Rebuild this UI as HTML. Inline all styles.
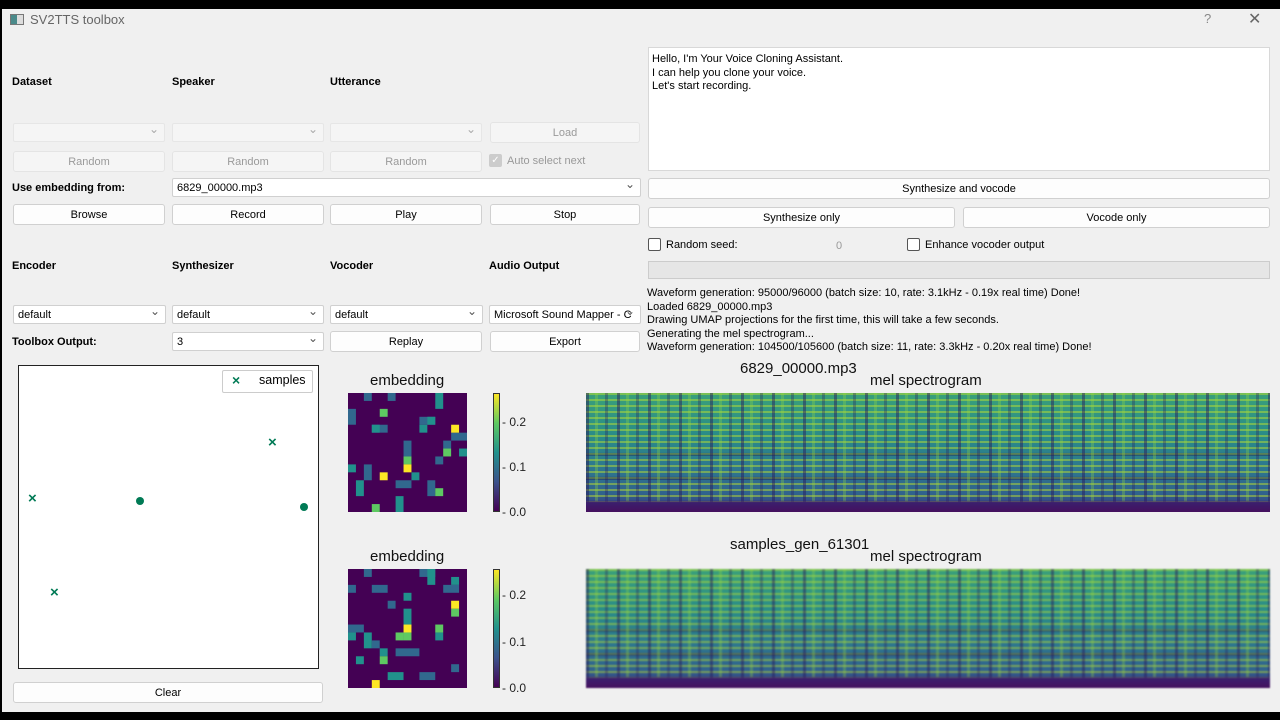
<!DOCTYPE html>
<html><head><meta charset="utf-8"><style>
*{box-sizing:border-box;margin:0;padding:0}
body{width:1280px;height:720px;background:#000;font-family:"Liberation Sans",sans-serif;font-size:11px;color:#000;position:relative;overflow:hidden}
.win{position:absolute;left:2px;top:9px;width:1278px;height:703px;background:#f0f0f0}
.a{position:absolute}
.lbl{position:absolute;font-weight:bold;font-size:11px;margin-top:1px}
.btn{position:absolute;height:21px;background:#fdfdfd;border:1px solid #d0d0d0;border-radius:3px;text-align:center;line-height:20px;font-size:11px}
.dis{background:#f5f5f5;border-color:#e4e4e4;color:#9a9a9a}
.cb{position:absolute;height:19px;background:#fff;border:1px solid #d0d0d0;border-radius:2px;line-height:18px;padding-left:4px;font-size:11px}
.cb:after{content:"⌄";position:absolute;right:5px;top:-4px;color:#555;font-size:12px}
.cbd{background:#f5f5f5;border-color:#e6e6e6}
.cbd:after{color:#aaa}
.t{position:absolute;font-size:15px;color:#111}
.spec{position:absolute;background:
linear-gradient(180deg,rgba(0,0,0,0) 0 90%,#3b1f6e 92%,#45105e 100%),
repeating-linear-gradient(90deg,rgba(40,20,90,.45) 0 3px,rgba(0,0,0,0) 3px 9px,rgba(150,220,60,.3) 9px 12px,rgba(0,0,0,0) 12px 19px,rgba(40,20,90,.3) 19px 22px,rgba(0,0,0,0) 22px 31px),
linear-gradient(180deg,rgba(0,0,0,0) 50%,rgba(20,20,80,.35) 51% 53%,rgba(0,0,0,0) 53% 70%,rgba(20,10,80,.35) 71% 73%,rgba(0,0,0,0) 73%),
repeating-linear-gradient(180deg,rgba(200,230,40,.45) 0 2px,rgba(0,0,0,0) 2px 6px),
linear-gradient(180deg,#3aa07a 0%,#2a8c88 35%,#2d7a8e 60%,#30628d 85%,#3b2f7a 100%)}
.cbar{position:absolute;width:7px;background:linear-gradient(0deg,#440154,#3b528b,#21918c,#5ec962,#fde725);border:1px solid #333}
.tick{position:absolute;font-size:12px;color:#222}
</style></head><body>
<div class="win">
<div class="a" style="left:8px;top:5px;width:14px;height:11px;border:1px solid #777;background:linear-gradient(90deg,#4a8a8a 50%,#ddd 50%)"></div>
<div class="a" style="left:28px;top:3px;font-size:13px;color:#666">SV2TTS toolbox</div>
<div class="a" style="left:1202px;top:2px;font-size:13px;color:#888">?</div>
<div class="a" style="left:1246px;top:0px;font-size:16px;color:#666">✕</div>

<div class="lbl" style="left:10px;top:66px">Dataset</div>
<div class="lbl" style="left:170px;top:66px">Speaker</div>
<div class="lbl" style="left:328px;top:66px">Utterance</div>
<div class="cb cbd" style="left:11px;top:114px;width:152px"></div>
<div class="cb cbd" style="left:170px;top:114px;width:152px"></div>
<div class="cb cbd" style="left:328px;top:114px;width:152px"></div>
<div class="btn dis" style="left:488px;top:113px;width:150px">Load</div>
<div class="btn dis" style="left:11px;top:142px;width:152px">Random</div>
<div class="btn dis" style="left:170px;top:142px;width:152px">Random</div>
<div class="btn dis" style="left:328px;top:142px;width:152px">Random</div>
<div class="a" style="left:487px;top:145px;width:13px;height:13px;background:#ccc;border-radius:2px;color:#fff;font-size:10px;text-align:center;line-height:13px">✓</div>
<div class="a" style="left:505px;top:146px;color:#999">Auto select next</div>
<div class="lbl" style="left:10px;top:172px">Use embedding from:</div>
<div class="cb" style="left:170px;top:169px;width:469px">6829_00000.mp3</div>
<div class="btn" style="left:11px;top:195px;width:152px">Browse</div>
<div class="btn" style="left:170px;top:195px;width:152px">Record</div>
<div class="btn" style="left:328px;top:195px;width:152px">Play</div>
<div class="btn" style="left:488px;top:195px;width:150px">Stop</div>

<div class="lbl" style="left:10px;top:250px">Encoder</div>
<div class="lbl" style="left:170px;top:250px">Synthesizer</div>
<div class="lbl" style="left:328px;top:250px">Vocoder</div>
<div class="lbl" style="left:487px;top:250px">Audio Output</div>
<div class="cb" style="left:11px;top:296px;width:153px">default</div>
<div class="cb" style="left:170px;top:296px;width:152px">default</div>
<div class="cb" style="left:328px;top:296px;width:153px">default</div>
<div class="cb" style="left:487px;top:296px;width:152px;overflow:hidden;white-space:nowrap">Microsoft Sound Mapper - C</div>
<div class="lbl" style="left:10px;top:326px">Toolbox Output:</div>
<div class="cb" style="left:170px;top:323px;width:152px">3</div>
<div class="btn" style="left:328px;top:322px;width:152px">Replay</div>
<div class="btn" style="left:488px;top:322px;width:150px">Export</div>

<div class="a" style="left:646px;top:38px;width:622px;height:124px;background:#fff;border:1px solid #d8d8d8;padding:5px 3px;line-height:13.5px;font-size:11px">Hello, I'm Your Voice Cloning Assistant.<br>I can help you clone your voice.<br>Let's start recording.</div>
<div class="btn" style="left:646px;top:169px;width:622px">Synthesize and vocode</div>
<div class="btn" style="left:646px;top:198px;width:307px">Synthesize only</div>
<div class="btn" style="left:961px;top:198px;width:307px">Vocode only</div>
<div class="a" style="left:646px;top:229px;width:13px;height:13px;background:#fff;border:1px solid #555;border-radius:2px"></div>
<div class="a" style="left:664px;top:230px">Random seed:</div>
<div class="a" style="left:800px;top:227px;width:102px;height:19px;background:#f0f0f0;color:#999;padding:4px 34px">0</div>
<div class="a" style="left:905px;top:229px;width:13px;height:13px;background:#fff;border:1px solid #555;border-radius:2px"></div>
<div class="a" style="left:923px;top:230px">Enhance vocoder output</div>
<div class="a" style="left:646px;top:252px;width:622px;height:18px;background:#e6e6e6;border:1px solid #ccc"></div>
<div class="a" style="left:645px;top:278px;line-height:13.5px;font-size:11px">Waveform generation: 95000/96000 (batch size: 10, rate: 3.1kHz - 0.19x real time) Done!<br>Loaded 6829_00000.mp3<br>Drawing UMAP projections for the first time, this will take a few seconds.<br>Generating the mel spectrogram...<br>Waveform generation: 104500/105600 (batch size: 11, rate: 3.3kHz - 0.20x real time) Done!</div>

<div class="a" style="left:16px;top:356px;width:301px;height:304px;background:#fff;border:1px solid #222"></div>
<div class="a" style="left:220px;top:361px;width:91px;height:23px;border:1px solid #ccc;border-radius:2px;background:#fff"></div>
<div class="a" style="left:230px;top:363px;color:#007a55;font-size:14px;font-weight:bold">×</div>
<div class="a" style="left:257px;top:364px;font-size:12.5px">samples</div>
<div class="a" style="left:266px;top:425px;color:#007a55;font-size:15px;font-weight:bold">×</div>
<div class="a" style="left:26px;top:481px;color:#007a55;font-size:15px;font-weight:bold">×</div>
<div class="a" style="left:48px;top:575px;color:#007a55;font-size:15px;font-weight:bold">×</div>
<div class="a" style="left:134px;top:488px;width:8px;height:8px;border-radius:50%;background:#007a55"></div>
<div class="a" style="left:298px;top:494px;width:8px;height:8px;border-radius:50%;background:#007a55"></div>
<div class="btn" style="left:11px;top:673px;width:310px">Clear</div>

<div class="t" style="left:368px;top:363px">embedding</div>
<svg class="a" style="left:346px;top:384px" width="119" height="119" viewBox="0 0 15 15"><rect width="15" height="15" fill="#440154"/>
<g fill="#31688e"><rect x="2" y="0" width="1" height="1"/><rect x="5" y="0" width="1" height="1"/><rect x="0" y="2" width="1" height="2"/><rect x="3" y="4" width="2" height="1"/><rect x="7" y="6" width="1" height="2"/><rect x="12" y="6" width="1" height="1"/><rect x="11" y="8" width="1" height="1"/><rect x="2" y="9" width="1" height="2"/><rect x="6" y="11" width="2" height="1"/><rect x="10" y="11" width="1" height="2"/><rect x="13" y="5" width="2" height="1"/><rect x="9" y="3" width="2" height="1"/></g>
<g fill="#21918c"><rect x="11" y="0" width="1" height="2"/><rect x="3" y="4" width="1" height="1"/><rect x="9" y="4" width="1" height="1"/><rect x="0" y="9" width="1" height="1"/><rect x="8" y="10" width="1" height="1"/><rect x="1" y="11" width="1" height="2"/><rect x="14" y="7" width="1" height="1"/><rect x="6" y="13" width="1" height="2"/><rect x="10" y="3" width="1" height="1"/></g>
<g fill="#5ec962"><rect x="4" y="2" width="1" height="1"/><rect x="7" y="8" width="1" height="1"/><rect x="12" y="7" width="1" height="1"/><rect x="3" y="14" width="1" height="1"/><rect x="11" y="12" width="1" height="1"/></g>
<g fill="#fde725"><rect x="13" y="4" width="1" height="1"/><rect x="4" y="10" width="1" height="1"/><rect x="7" y="9" width="1" height="1"/></g></svg>
<div class="cbar" style="left:491px;top:384px;height:119px"></div>
<div class="tick" style="left:500px;top:406px">- 0.2</div>
<div class="tick" style="left:500px;top:451px">- 0.1</div>
<div class="tick" style="left:500px;top:496px">- 0.0</div>

<div class="t" style="left:368px;top:539px">embedding</div>
<svg class="a" style="left:346px;top:560px" width="119" height="119" viewBox="0 0 15 15"><rect width="15" height="15" fill="#440154"/>
<g fill="#31688e"><rect x="2" y="0" width="1" height="1"/><rect x="9" y="0" width="2" height="1"/><rect x="0" y="2" width="1" height="1"/><rect x="3" y="2" width="2" height="1"/><rect x="5" y="4" width="1" height="1"/><rect x="0" y="7" width="2" height="1"/><rect x="3" y="9" width="1" height="1"/><rect x="6" y="10" width="3" height="1"/><rect x="9" y="13" width="2" height="1"/><rect x="13" y="12" width="1" height="1"/><rect x="12" y="2" width="2" height="1"/></g>
<g fill="#21918c"><rect x="10" y="0" width="1" height="2"/><rect x="13" y="1" width="1" height="1"/><rect x="7" y="3" width="1" height="1"/><rect x="7" y="5" width="1" height="2"/><rect x="0" y="8" width="1" height="1"/><rect x="2" y="8" width="1" height="2"/><rect x="4" y="10" width="1" height="1"/><rect x="1" y="11" width="1" height="1"/><rect x="11" y="8" width="1" height="1"/><rect x="5" y="13" width="2" height="1"/></g>
<g fill="#5ec962"><rect x="13" y="5" width="1" height="1"/><rect x="6" y="8" width="1" height="1"/><rect x="7" y="8" width="1" height="1"/><rect x="4" y="11" width="1" height="1"/><rect x="11" y="7" width="1" height="1"/></g>
<g fill="#fde725"><rect x="13" y="4" width="1" height="1"/><rect x="7" y="7" width="1" height="1"/><rect x="3" y="14" width="1" height="1"/></g></svg>
<div class="cbar" style="left:491px;top:560px;height:119px"></div>
<div class="tick" style="left:500px;top:579px">- 0.2</div>
<div class="tick" style="left:500px;top:626px">- 0.1</div>
<div class="tick" style="left:500px;top:672px">- 0.0</div>

<div class="t" style="left:738px;top:351px">6829_00000.mp3</div>
<div class="t" style="left:868px;top:363px">mel spectrogram</div>
<div class="spec" style="left:584px;top:384px;width:684px;height:119px"></div>
<div class="t" style="left:728px;top:527px">samples_gen_61301</div>
<div class="t" style="left:868px;top:539px">mel spectrogram</div>
<div class="spec" style="left:584px;top:560px;width:684px;height:119px;filter:blur(.8px)"></div>
</div>
</body></html>
